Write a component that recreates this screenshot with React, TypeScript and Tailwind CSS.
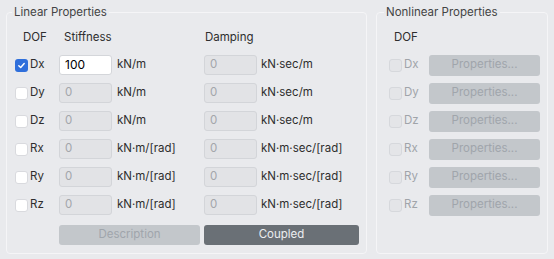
import React from 'react';

const dofs = [
  { name: 'Dx', checked: true, value: '100', k: 'kN/m', c: 'kN·sec/m' },
  { name: 'Dy', checked: false, value: '0', k: 'kN/m', c: 'kN·sec/m' },
  { name: 'Dz', checked: false, value: '0', k: 'kN/m', c: 'kN·sec/m' },
  { name: 'Rx', checked: false, value: '0', k: 'kN·m/[rad]', c: 'kN·m·sec/[rad]' },
  { name: 'Ry', checked: false, value: '0', k: 'kN·m/[rad]', c: 'kN·m·sec/[rad]' },
  { name: 'Rz', checked: false, value: '0', k: 'kN·m/[rad]', c: 'kN·m·sec/[rad]' },
];

const CheckBox: React.FC<{ checked?: boolean; disabled?: boolean }> = ({ checked, disabled }) => {
  if (checked) {
    return (
      <span className="flex h-[13px] w-[13px] items-center justify-center rounded-[3px] bg-[#2f6fdb]">
        <svg width="9" height="9" viewBox="0 0 10 10" fill="none">
          <path d="M2 5.2L4.1 7.2L8 2.8" stroke="white" strokeWidth="1.6" strokeLinecap="round" strokeLinejoin="round" />
        </svg>
      </span>
    );
  }
  return (
    <span
      className={
        disabled
          ? 'h-[13px] w-[13px] rounded-[3px] border border-[#d6d8dc] bg-[#e4e5e8]'
          : 'h-[13px] w-[13px] rounded-[3px] border border-[#d9dade] bg-white'
      }
    />
  );
};

const App: React.FC = () => {
  return (
    <div
      className="flex h-[259px] w-[554px] gap-[9px] bg-[#e9eaed] px-[6px] pt-[5px] pb-[5px] text-[11.5px] text-[#2e2e2e]"
      style={{ fontFamily: 'Inter, "Noto Sans", sans-serif' }}
    >
      {/* Linear */}
      <fieldset className="w-[361px] rounded-[4px] border border-[#f5f5f7] pl-[8px] pr-[7px] pb-[6px]">
        <legend className="-ml-[3px] px-[2px] leading-[15px] text-[#444]">Linear Properties</legend>
        <div className="mt-[8px] flex h-[20px] items-center">
          <span className="w-[49px] pl-[8px]">DOF</span>
          <span className="w-[141px]">Stiffness</span>
          <span>Damping</span>
        </div>
        <div className="mt-[7px] flex flex-col gap-[8px]">
          {dofs.map((d) => (
            <div key={d.name} className="flex h-[20px] items-center">
              <div className="flex w-[44px] items-center gap-[2px]">
                <CheckBox checked={d.checked} />
                <span>{d.name}</span>
              </div>
              {d.checked ? (
                <div className="flex h-[20px] w-[53px] items-center rounded-[3px] border border-[#d4d6da] bg-white pl-[5px] text-[12px] text-black">
                  {d.value}
                </div>
              ) : (
                <div className="flex h-[20px] w-[53px] items-center rounded-[3px] border border-[#d3d5d9] bg-[#e2e3e6] pl-[5px] text-[#a3a6ab]">
                  {d.value}
                </div>
              )}
              <span className="w-[92px] pl-[5px]">{d.k}</span>
              <div className="flex h-[20px] w-[53px] items-center rounded-[3px] border border-[#d3d5d9] bg-[#e2e3e6] pl-[5px] text-[#a3a6ab]">
                0
              </div>
              <span className="pl-[4px]">{d.c}</span>
            </div>
          ))}
        </div>
        <div className="mt-[10px] ml-[44px] flex h-[20px] gap-[4px]">
          <div className="flex w-[141px] items-center justify-center rounded-[3px] bg-[#c3c7cb] text-[#a0a5ab]">
            Description
          </div>
          <div className="flex w-[155px] items-center justify-center rounded-[3px] bg-[#6a7076] text-[#eceef0]">
            Coupled
          </div>
        </div>
      </fieldset>

      {/* Nonlinear */}
      <fieldset className="w-[172px] rounded-[4px] border border-[#f5f5f7] pl-[12px] pr-[7px] pb-[6px]">
        <legend className="-ml-[5px] px-[2px] leading-[15px] text-[#444]">Nonlinear Properties</legend>
        <div className="mt-[8px] flex h-[20px] items-center">
          <span className="pl-[5px]">DOF</span>
        </div>
        <div className="mt-[7px] flex flex-col gap-[8px]">
          {dofs.map((d) => (
            <div key={d.name} className="flex h-[20px] items-center">
              <div className="flex w-[40px] items-center gap-[2px] text-[#a0a4a9]">
                <CheckBox disabled />
                <span>{d.name}</span>
              </div>
              <div className="flex h-[21px] w-[111px] items-center justify-center rounded-[3px] bg-[#c3c7cb] text-[#a0a5ab]">
                Properties...
              </div>
            </div>
          ))}
        </div>
      </fieldset>
    </div>
  );
};

export default App;
